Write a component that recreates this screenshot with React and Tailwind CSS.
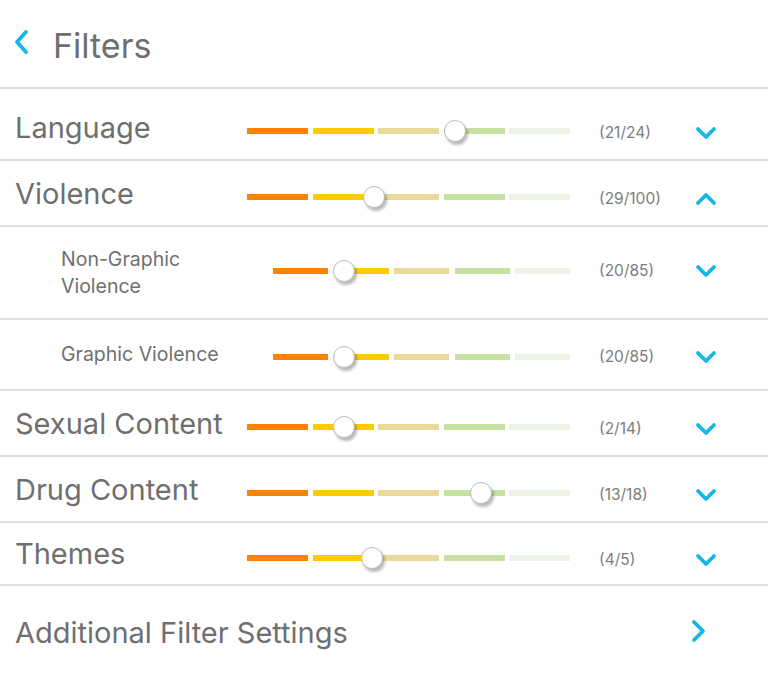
import React from "react";

const SEG_COLORS = ["bg-[#ff8300]", "bg-[#fdcb00]", "bg-[#e9da9b]", "bg-[#c7e1a3]", "bg-[#edf2e6]"];

function Chevron({ dir = "down" }) {
    const pts = dir === "down" ? "3,3 11,11 19,3" : "3,11 11,3 19,11";
    return (
        <svg width="22" height="14" viewBox="0 0 22 14" className="block">
            <polyline points={pts} fill="none" stroke="#13b6e6" strokeWidth="3.8" strokeLinecap="round" strokeLinejoin="round" />
        </svg>
    );
}

function Slider({ value, sub }) {
    // value = thumb position as a fraction of the bar
    return (
        <div className={`relative flex items-center ${sub ? "w-[297px] gap-[5.5px]" : "w-[323px] gap-[4.5px]"}`}>
            {SEG_COLORS.map((c) => (
                <div key={c} className={`h-[6px] flex-1 ${c}`} />
            ))}
            <div
                className="absolute top-1/2 w-[22px] h-[22px] -ml-[11px] -translate-y-1/2 rounded-full bg-white border border-[#bdbdbd] shadow-[2px_3px_3px_rgba(0,0,0,0.28)]"
                style={{ left: `${value * 100}%` }}
            />
        </div>
    );
}

function FilterRow({ label, count, value, open, sub, height, barMt = "mt-[8px]", iconMt = "mt-[4px]" }) {
    return (
        <div className={`flex items-center border-b-2 border-[#e0e0e0] ${height}`}>
            {sub ? (
                <div className="w-[273px] pl-[61px] pr-4 text-[19.5px] leading-[27px] text-[#707070]">{label}</div>
            ) : (
                <div className="w-[247px] pl-[15px] text-[29px] leading-none text-[#6f6f6f] whitespace-nowrap">{label}</div>
            )}
            <div className={`flex items-center ${barMt}`}>
                <Slider value={value} sub={sub} />
                <div className={`w-[125px] pl-[29px] text-[15.5px] text-[#7d7d7d] ${iconMt}`}>{count}</div>
                <div className={iconMt}>
                    <Chevron dir={open ? "up" : "down"} />
                </div>
            </div>
        </div>
    );
}

export default function App() {
    return (
        <div className="w-[768px] h-[673px] bg-white overflow-hidden font-['Inter',sans-serif]">
            {/* header */}
            <div className="flex items-center h-[89px] border-b-2 border-[#e0e0e0] pb-[1px]">
                <svg width="18" height="28" viewBox="0 0 18 28" className="ml-[12px] -mt-[2px]">
                    <polyline points="14,4 5,14 14,24" fill="none" stroke="#13b6e6" strokeWidth="3.8" strokeLinecap="round" strokeLinejoin="round" />
                </svg>
                <h1 className="ml-[23px] text-[34px] text-[#6f6f6f] mt-[4px]">Filters</h1>
            </div>

            <FilterRow label="Language" count="(21/24)" value={0.644} height="h-[72px] pt-[6px]" />
            <FilterRow label="Violence" count="(29/100)" value={0.392} open height="h-[66px]" />
            <FilterRow
                label={<>Non-Graphic<br />Violence</>}
                count="(20/85)"
                value={0.239}
                sub
                height="h-[93px]"
                barMt="-mt-[4px]"
                iconMt="mt-[0px]"
            />
            <FilterRow label="Graphic Violence" count="(20/85)" value={0.239} sub height="h-[71px]" barMt="mt-[4px]" iconMt="mt-[0px]" />
            <FilterRow label="Sexual Content" count="(2/14)" value={0.3} height="h-[66px]" />
            <FilterRow label="Drug Content" count="(13/18)" value={0.724} height="h-[66px]" />
            <FilterRow label="Themes" count="(4/5)" value={0.387} height="h-[63px]" />

            {/* additional settings */}
            <div className="flex items-center h-[87px] pt-[6px]">
                <div className="w-[690px] pl-[15px] text-[29px] text-[#6f6f6f]">Additional Filter Settings</div>
                <svg width="18" height="24" viewBox="0 0 18 24" className="-mt-[4px]">
                    <polyline points="4,3 13,12 4,21" fill="none" stroke="#13b6e6" strokeWidth="3.8" strokeLinecap="round" strokeLinejoin="round" />
                </svg>
            </div>
        </div>
    );
}
